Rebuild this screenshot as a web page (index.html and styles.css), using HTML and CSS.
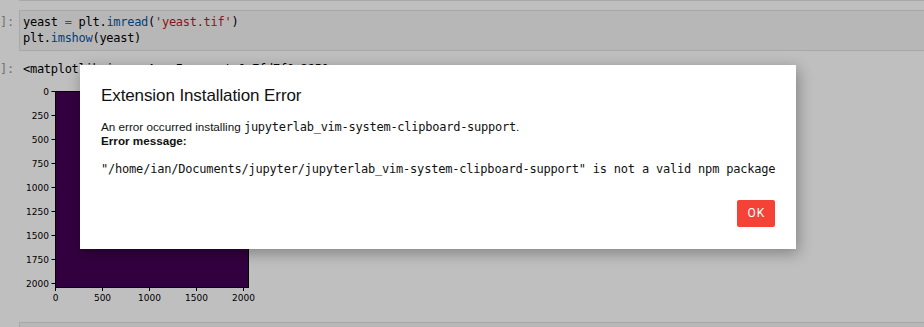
FILE: index.html
```html
<!DOCTYPE html>
<html>
<head>
<meta charset="utf-8">
<link rel="stylesheet" href="styles.css">
</head>
<body>
<div class="page">
  <div class="prev-edge"></div>
  <div class="cell">
    <div class="row">
      <div class="prompt"><span>[2]:</span></div>
      <div class="input"><pre class="code"><span class="var">yeast</span> <span class="op">=</span> plt.<span class="prop">imread</span>(<span class="str">'yeast.tif'</span>)
plt.<span class="prop">imshow</span>(yeast)</pre></div>
    </div>
    <div class="row out">
      <div class="prompt"><span>[2]:</span></div>
      <div class="output">
        <div class="out-text">&lt;matplotlib.image.AxesImage at 0x7fd7f0c2850&gt;</div>
        <svg class="plot" width="260" height="235" viewBox="0 0 260 235">
          <rect x="36.5" y="14.5" width="193" height="196" fill="#440154" stroke="#000" stroke-width="1"/>
          <g stroke="#000" stroke-width="1">
            <line x1="32.5" y1="14.5" x2="36.5" y2="14.5"/>
            <line x1="32.5" y1="38.5" x2="36.5" y2="38.5"/>
            <line x1="32.5" y1="62.5" x2="36.5" y2="62.5"/>
            <line x1="32.5" y1="86.5" x2="36.5" y2="86.5"/>
            <line x1="32.5" y1="110.5" x2="36.5" y2="110.5"/>
            <line x1="32.5" y1="134.5" x2="36.5" y2="134.5"/>
            <line x1="32.5" y1="158.5" x2="36.5" y2="158.5"/>
            <line x1="32.5" y1="182.5" x2="36.5" y2="182.5"/>
            <line x1="32.5" y1="206.5" x2="36.5" y2="206.5"/>
            <line x1="36.5" y1="210.5" x2="36.5" y2="214"/>
            <line x1="83.5" y1="210.5" x2="83.5" y2="214"/>
            <line x1="130.5" y1="210.5" x2="130.5" y2="214"/>
            <line x1="177.5" y1="210.5" x2="177.5" y2="214"/>
            <line x1="224.5" y1="210.5" x2="224.5" y2="214"/>
          </g>
          <g class="ylab" text-anchor="end">
            <text x="30" y="17.5">0</text>
            <text x="30" y="41.5">250</text>
            <text x="30" y="65.5">500</text>
            <text x="30" y="89.5">750</text>
            <text x="30" y="113.5">1000</text>
            <text x="30" y="137.5">1250</text>
            <text x="30" y="161.5">1500</text>
            <text x="30" y="185.5">1750</text>
            <text x="30" y="209.5">2000</text>
          </g>
          <g class="xlab" text-anchor="middle">
            <text x="36.5" y="223.5">0</text>
            <text x="83.5" y="223.5">500</text>
            <text x="130.5" y="223.5">1000</text>
            <text x="177.5" y="223.5">1500</text>
            <text x="224.5" y="223.5">2000</text>
          </g>
        </svg>
      </div>
    </div>
  </div>
  <div class="cell next">
    <div class="row">
      <div class="prompt"></div>
      <div class="input empty"></div>
    </div>
  </div>
</div>
<div class="overlay"></div>
<div class="dialog">
  <div class="dialog-title">Extension Installation Error</div>
  <div class="dialog-body">An error occurred installing <code>jupyterlab_vim-system-clipboard-support</code>.<br><b>Error message:</b><pre class="msg">"/home/ian/Documents/jupyter/jupyterlab_vim-system-clipboard-support" is not a valid npm package</pre></div>
  <div class="dialog-footer"><button class="ok">OK</button></div>
</div>
</body>
</html>
```
FILE: styles.css
```css
html, body {
  margin: 0;
  padding: 0;
  overflow: hidden;
  background: #ffffff;
}
body {
  width: 924px;
  height: 327px;
  position: relative;
  font-family: "Liberation Sans", Arial, sans-serif;
}
.page {
  width: 980px;
}
.prev-edge {
  margin-left: 19px;
  border-top: 1px solid #e0e0e0;
}
.cell {
  margin-top: 9px;
}
.cell.next {
  margin-top: 10px;
}
.row {
  display: flex;
  align-items: flex-start;
}
.row.out {
  margin-top: 10px;
}
.prompt {
  width: 19px;
  flex: 0 0 19px;
  display: flex;
  justify-content: flex-end;
  overflow: hidden;
  padding-top: 5px;
  box-sizing: border-box;
  padding-right: 5px;
  font-family: "DejaVu Sans Mono", monospace;
  font-size: 12px;
  letter-spacing: -0.28px;
  line-height: 15.5px;
  color: #9a9a9a;
  white-space: nowrap;
}
.row.out .prompt {
  padding-top: 0;
  line-height: 16px;
}
.input {
  flex: 1;
  background: #f5f5f5;
  border: 1px solid #e0e0e0;
  padding: 4px 0 4px 3px;
}
.input.empty {
  height: 40px;
}
.code {
  margin: 0;
  font-family: "DejaVu Sans Mono", monospace;
  font-size: 12px;
  letter-spacing: -0.28px;
  line-height: 15.5px;
  color: #000;
}
.code .op { color: #aa22ff; }
.code .prop { color: #0055aa; }
.code .str { color: #ba2121; }
.output {
  flex: 1;
  padding-left: 4px;
}
.out-text {
  font-family: "DejaVu Sans Mono", monospace;
  font-size: 12px;
  letter-spacing: -0.28px;
  line-height: 16px;
  color: #000;
  white-space: nowrap;
}
.plot {
  display: block;
  margin-left: -4px;
}
.plot text {
  font-family: "DejaVu Sans", sans-serif;
  font-size: 9px;
  fill: #000;
}
.overlay {
  position: absolute;
  inset: 0;
  background: rgba(0, 0, 0, 0.25);
}
.dialog {
  position: absolute;
  left: 80px;
  top: 65px;
  width: 716px;
  box-sizing: border-box;
  padding: 20px 21px 22px 21px;
  background: #ffffff;
  box-shadow: 2px 4px 14px rgba(0, 0, 0, 0.32);
}
.dialog-title {
  font-family: "Liberation Sans", Arial, sans-serif;
  font-size: 17px;
  letter-spacing: -0.1px;
  line-height: 21.6px;
  color: #111;
  margin-bottom: 13px;
}
.dialog-body {
  font-family: "Liberation Sans", Arial, sans-serif;
  font-size: 11.7px;
  line-height: 14px;
  color: #111;
}
.dialog-body code {
  font-family: "DejaVu Sans Mono", monospace;
  font-size: 12px;
  letter-spacing: -0.25px;
}
.dialog-body b {
  font-weight: bold;
}
.msg {
  margin: 14px 0 0 0;
  font-family: "DejaVu Sans Mono", monospace;
  font-size: 12px;
  letter-spacing: -0.2px;
  line-height: 15px;
  color: #111;
}
.dialog-footer {
  display: flex;
  justify-content: flex-end;
  margin-top: 23px;
}
.ok {
  width: 38px;
  height: 27px;
  border: none;
  border-radius: 2px;
  background: #f44336;
  color: #fff;
  font-family: "Roboto", "Liberation Sans", sans-serif;
  font-size: 12px;
  letter-spacing: 1px;
  padding: 0 0 0 1px;
}
```
